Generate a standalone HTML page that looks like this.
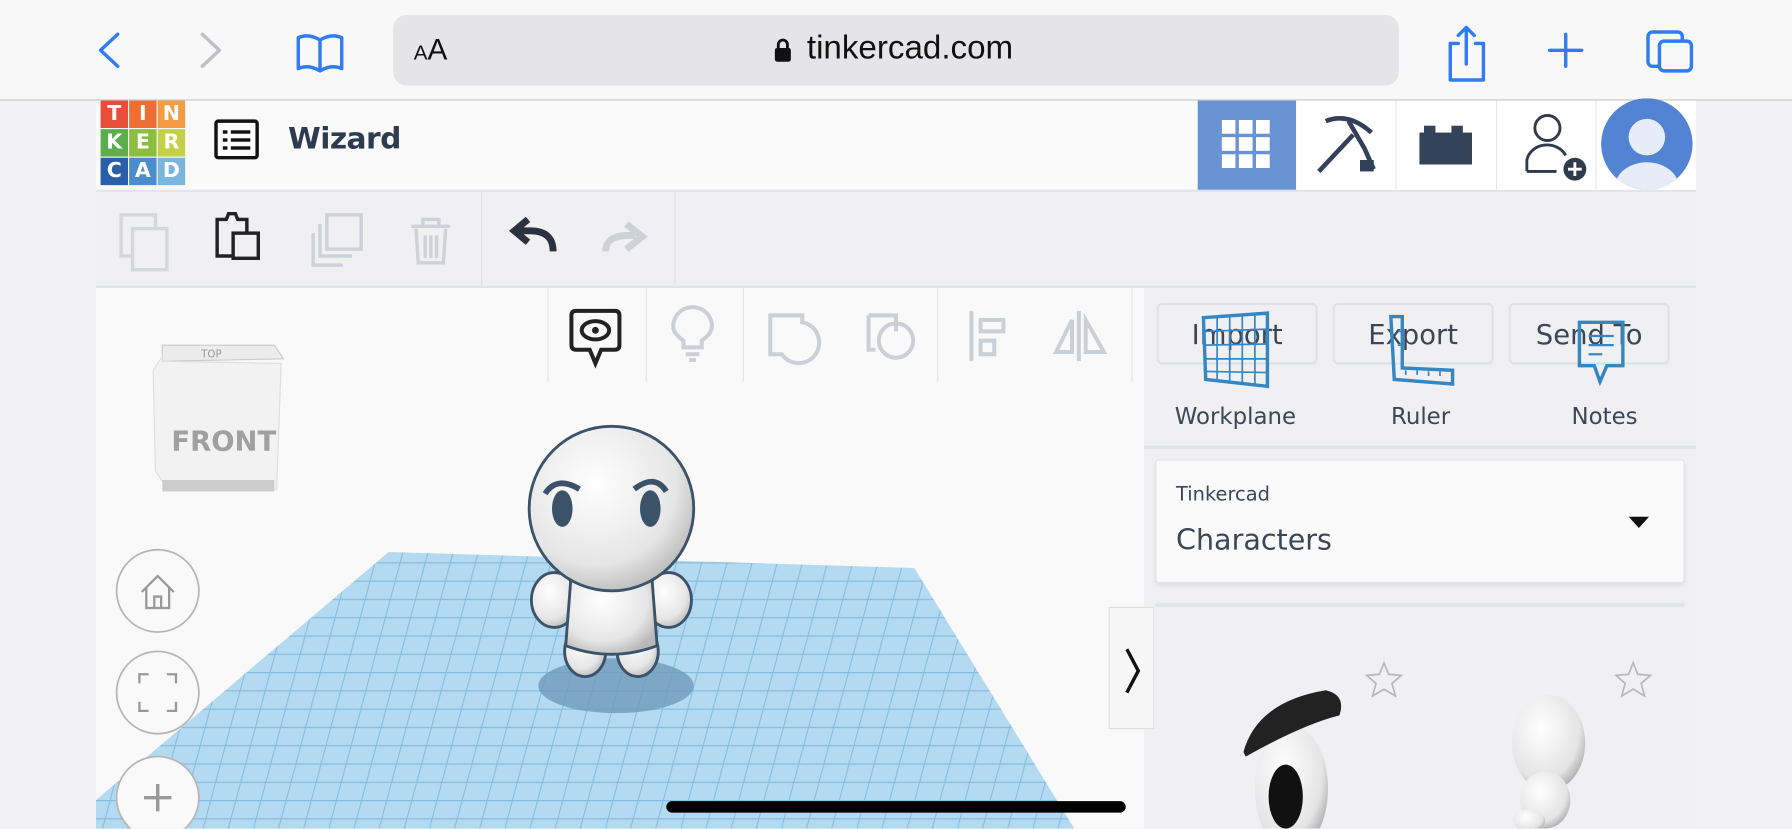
<!DOCTYPE html>
<html><head><meta charset="utf-8"><style>
html,body{margin:0;padding:0;width:1792px;height:828px;overflow:hidden;background:#f2f2f4}
#s{position:absolute;left:0;top:0;width:1568px;height:725px;transform:scale(1.142857);transform-origin:0 0;font-family:"Liberation Sans","DejaVu Sans",sans-serif;background:#f2f2f4;overflow:hidden}
.a{position:absolute}
.btn{position:absolute;top:265px;height:54px;width:141px;border:2px solid #dfe2e8;border-radius:5px;box-sizing:border-box;text-align:center;line-height:52px;font-size:24px;color:#3b4757;font-family:"DejaVu Sans",sans-serif}
.lbl{position:absolute;top:352px;font-size:20px;color:#3b4757;font-family:"DejaVu Sans",sans-serif;width:160px;text-align:center}
.cell{position:absolute;width:24px;height:24px;color:#fff;font:bold 18px "DejaVu Sans",sans-serif;text-align:center;line-height:24px}
</style></head><body><div id="s">
<div class="a" style="left:0;top:0;width:1568px;height:87px;background:#f8f8f8;border-bottom:1px solid #c4c4c4"></div>
<svg class="a" style="left:0;top:0" width="1568" height="88">
<g fill="none" stroke-width="3" stroke-linecap="round" stroke-linejoin="round">
<path d="M103 30 L88 44 L103 58" stroke="#2f7cf6"/>
<path d="M177 30 L192 44 L177 58" stroke="#c0c0c4"/>
<path d="M261 33 Q270 29 280 35 Q290 29 299 33 V60 Q290 56 280 62 Q270 56 261 60 Z M280 35 V62" stroke="#2f7cf6"/>
<path d="M1202 38 A12 12 0 1 1 1190 32" stroke="#111" stroke-width="2.5"/>
<path d="M1186 27 L1192 32 L1186 37" stroke="#111" stroke-width="2.5"/>
<path d="M1276 38 H1269 V70 H1298 V38 H1291 M1283 56 V25 M1276 31 L1283 24 L1290 31" stroke="#2f7cf6"/>
<path d="M1370 30 V58 M1356 44 H1384" stroke="#2f7cf6"/>
<rect x="1442" y="28" width="30" height="30" rx="4" stroke="#2f7cf6"/>
<rect x="1452" y="36" width="28" height="26" rx="4" stroke="#2f7cf6" fill="#f8f8f8"/>
</g></svg>
<div class="a" style="left:344px;top:13px;width:880px;height:62px;background:#e5e5e7;border-radius:12px"></div>
<div class="a" style="left:362px;top:28px;font-size:26px;color:#111"><span style="font-size:18px">A</span>A</div>
<svg class="a" style="left:677px;top:33px" width="16" height="22"><rect x="1" y="9" width="14" height="12" rx="2" fill="#111"/><path d="M4 10 V6 A4 4 0 0 1 12 6 V10" fill="none" stroke="#111" stroke-width="2.5"/></svg>
<div class="a" style="left:706px;top:26px;font-size:29px;color:#111">tinkercad.com</div>
<div class="a" style="left:84px;top:88px;width:1400px;height:78px;background:#fafafa;border-bottom:2px solid #e3e5ea"></div>
<div class="cell" style="left:88px;top:88px;background:#e84f3b">T</div><div class="cell" style="left:113px;top:88px;background:#ef6e35">I</div><div class="cell" style="left:138px;top:88px;background:#f49b44">N</div>
<div class="cell" style="left:88px;top:113px;background:#5cad4c">K</div><div class="cell" style="left:113px;top:113px;background:#8bbd3e">E</div><div class="cell" style="left:138px;top:113px;background:#c4d048">R</div>
<div class="cell" style="left:88px;top:138px;background:#2a5ea8">C</div><div class="cell" style="left:113px;top:138px;background:#4a8ccc">A</div><div class="cell" style="left:138px;top:138px;background:#7ab5dd">D</div>
<svg class="a" style="left:187px;top:104px" width="40" height="36"><rect x="2" y="2" width="36" height="32" rx="2" fill="none" stroke="#111" stroke-width="3"/><g fill="#111"><rect x="8" y="10" width="4" height="3"/><rect x="15" y="10" width="17" height="3"/><rect x="8" y="17" width="4" height="3"/><rect x="15" y="17" width="17" height="3"/><rect x="8" y="24" width="4" height="3"/><rect x="15" y="24" width="17" height="3"/></g></svg>
<div class="a" style="left:252px;top:107px;font:600 26px 'DejaVu Sans',sans-serif;color:#2d3b4e;letter-spacing:-0.5px">Wizard</div>
<div class="a" style="left:1048px;top:88px;width:86px;height:78px;background:#6a93d4"></div>
<svg class="a" style="left:1069px;top:105px" width="44" height="44" fill="#fff"><rect x="0" y="0" width="12" height="12"/><rect x="15" y="0" width="12" height="12"/><rect x="30" y="0" width="12" height="12"/><rect x="0" y="15" width="12" height="12"/><rect x="15" y="15" width="12" height="12"/><rect x="30" y="15" width="12" height="12"/><rect x="0" y="30" width="12" height="12"/><rect x="15" y="30" width="12" height="12"/><rect x="30" y="30" width="12" height="12"/></svg>
<div class="a" style="left:1135px;top:88px;width:349px;height:78px;background:#fff"></div>
<div class="a" style="left:1221px;top:88px;width:1px;height:78px;background:#e6e6e6"></div><div class="a" style="left:1309px;top:88px;width:1px;height:78px;background:#e6e6e6"></div><div class="a" style="left:1396px;top:88px;width:1px;height:78px;background:#e6e6e6"></div>
<svg class="a" style="left:1150px;top:96px" width="60" height="60" fill="none" stroke="#34405a" stroke-width="4"><path d="M10 10 Q30 2 50 20 M30 10 L44 34 L52 52 M34 22 L4 54"/><rect x="40" y="44" width="12" height="10" fill="#34405a" stroke="none"/></svg>
<svg class="a" style="left:1240px;top:108px" width="50" height="36"><rect x="2" y="8" width="46" height="28" fill="#35435a"/><rect x="6" y="2" width="10" height="8" fill="#35435a"/><rect x="30" y="2" width="10" height="8" fill="#35435a"/></svg>
<svg class="a" style="left:1330px;top:98px" width="62" height="62" fill="none" stroke="#2f3a4d" stroke-width="2.5"><circle cx="24" cy="14" r="11"/><path d="M6 52 V42 A18 16 0 0 1 40 38 M6 52 H32"/><circle cx="48" cy="50" r="10" fill="#2f3a4d" stroke="none"/><path d="M48 44 V56 M42 50 H54" stroke="#fff"/></svg>
<svg class="a" style="left:1400px;top:86px" width="84" height="80"><clipPath id="c"><circle cx="41" cy="40" r="40"/></clipPath><circle cx="41" cy="40" r="40" fill="#5383d3"/><g clip-path="url(#c)" fill="#e6ecf8"><circle cx="41" cy="34" r="16"/><ellipse cx="41" cy="78" rx="28" ry="22"/></g></svg>
<div class="a" style="left:84px;top:168px;width:1400px;height:82px;background:#f0f0f2;border-bottom:3px solid #e1e4ea"></div>
<div class="a" style="left:421px;top:168px;width:1px;height:82px;background:#dfe1e6"></div><div class="a" style="left:590px;top:168px;width:1px;height:82px;background:#dfe1e6"></div>
<svg class="a" style="left:100px;top:180px" width="490" height="60" fill="none" stroke-width="3">
<rect x="6" y="8" width="30" height="36" stroke="#d4d7dc"/><rect x="16" y="20" width="30" height="36" stroke="#d4d7dc" fill="#f0f0f2"/>
<path d="M90 12 H98 L100 7 H106 L108 12 H116 V44 H90 Z" stroke="#222"/><rect x="104" y="24" width="22" height="22" stroke="#222" fill="#f0f0f2"/>
<rect x="186" y="8" width="30" height="30" stroke="#cdd1d8"/><path d="M180 16 V44 H208 M174 24 V52 H200" stroke="#cdd1d8"/>
<path d="M260 18 H294 M270 18 V12 H284 V18 M264 20 L266 50 H288 L290 20 M272 26 V46 M277 26 V46 M282 26 V46" stroke="#cdd1d8"/>
<path d="M384 40 Q384 22 364 22 H354 M362 12 L350 22 L362 32" stroke="#2a3240" stroke-width="6"/>
<path d="M430 40 Q430 26 450 26 H456 M448 16 L462 27 L448 38" stroke="#cdd1d8" stroke-width="6"/>
</svg>
<div class="a" style="left:84px;top:252px;width:917px;height:473px;background:#f9f9f9"></div>
<div class="a" style="left:479px;top:252px;width:1px;height:82px;background:#e3e4e8"></div><div class="a" style="left:565px;top:252px;width:1px;height:82px;background:#e3e4e8"></div><div class="a" style="left:650px;top:252px;width:1px;height:82px;background:#e3e4e8"></div><div class="a" style="left:820px;top:252px;width:1px;height:82px;background:#e3e4e8"></div><div class="a" style="left:990px;top:252px;width:1px;height:82px;background:#e3e4e8"></div>
<svg class="a" style="left:480px;top:252px" width="520" height="80" fill="none" stroke-width="3.5">
<path d="M24 20 H58 Q62 20 62 24 V50 Q62 54 58 54 H46 L41 66 L36 54 H24 Q20 54 20 50 V24 Q20 20 24 20 Z" stroke="#222"/>
<ellipse cx="41" cy="37" rx="12" ry="8" stroke="#222"/><circle cx="41" cy="37" r="3" fill="#222"/>
<path d="M118 52 V46 Q106 38 110 28 A17 17 0 0 1 142 28 Q146 38 134 46 V52 Z M120 58 H132 M123 63 H129" stroke="#cbd0d8"/>
<path d="M194 24 H222 V30 A18 18 0 1 1 204 58 H194 Z" stroke="#cbd0d8"/>
<path d="M280 24 H304 V38 M286 54 H280 V24" stroke="#cbd0d8"/><circle cx="304" cy="46" r="15" stroke="#cbd0d8"/>
<path d="M370 20 V64 M378 28 H398 V38 H378 Z M378 46 H390 V58 H378 Z" stroke="#cbd0d8"/>
<path d="M464 20 V64 M458 28 L444 56 H458 Z M470 28 L486 56 H470 Z" stroke="#cbd0d8"/>
</svg>
<svg class="a" style="left:128px;top:294px" width="125" height="145">
<path d="M14 8 L112 8 L120 20 L14 22 Z" fill="#ececec" stroke="#ccc"/>
<text x="48" y="19" font-size="9" fill="#999" font-family="DejaVu Sans">TOP</text>
<path d="M6 30 L14 18 L14 22 L118 24 L114 134 L16 130 L8 118 Z" fill="#f2f2f2" stroke="#ddd"/>
<rect x="14" y="126" width="98" height="10" fill="#ccc"/>
<text x="22" y="100" font-size="24" font-weight="bold" fill="#a0a0a0" font-family="DejaVu Sans">FRONT</text>
</svg>
<svg class="a" style="left:84px;top:252px" width="917" height="473">
<defs><pattern id="g" width="22" height="16" patternUnits="userSpaceOnUse" patternTransform="skewX(-15)"><rect width="22" height="16" fill="#b3daf0"/><path d="M0 0.5 H22 M0.5 0 V16" stroke="#86bde0" stroke-width="1"/></pattern></defs>
<polygon points="256,231 716,245 856,473 0,473 0,448" fill="url(#g)"/>
<ellipse cx="455" cy="348" rx="68" ry="24" fill="#6f9ab9" opacity="0.8"/>
</svg>
<svg class="a" style="left:455px;top:370px" width="170" height="230">
<defs><radialGradient id="w" cx="0.4" cy="0.35" r="0.7"><stop offset="0" stop-color="#fff"/><stop offset="0.7" stop-color="#e6e6e6"/><stop offset="1" stop-color="#b8b8b8"/></radialGradient></defs>
<g stroke="#3b5269" stroke-width="2.5" fill="url(#w)">
<ellipse cx="57" cy="200" rx="18" ry="22"/><ellipse cx="103" cy="200" rx="18" ry="22"/>
<ellipse cx="30" cy="155" rx="20" ry="24"/><ellipse cx="130" cy="155" rx="20" ry="24"/>
<path d="M45 130 H115 L120 195 Q80 210 40 195 Z"/>
<circle cx="80" cy="75" r="72"/>
</g>
<g fill="#3b5269"><ellipse cx="37" cy="75" rx="9" ry="16"/><ellipse cx="114" cy="75" rx="9" ry="16"/></g>
<path d="M22 62 Q32 46 52 58 M100 58 Q118 44 128 60" stroke="#3b5269" stroke-width="5" fill="none"/>
</svg>
<svg class="a" style="left:100px;top:478px" width="80" height="247" fill="none" stroke="#b5b5b5" stroke-width="1.5">
<circle cx="38" cy="39" r="36" fill="#f9f9f9"/><circle cx="38" cy="128" r="36" fill="#f9f9f9"/><circle cx="38" cy="220" r="36" fill="#f9f9f9"/>
<path d="M24 40 L38 26 L52 40 M28 36 V54 H48 V36 M35 54 V44 H41 V54" stroke="#999" stroke-width="2"/>
<path d="M22 120 V112 H30 M46 112 H54 V120 M54 136 V144 H46 M30 144 H22 V136" stroke="#999" stroke-width="2"/>
<path d="M38 208 V232 M26 220 H50" stroke="#999" stroke-width="3"/>
</svg>
<div class="a" style="left:1001px;top:252px;width:483px;height:473px;background:#f0f0f2"></div>
<div class="btn" style="left:1012px">Import</div>
<div class="btn" style="left:1166px">Export</div>
<div class="btn" style="left:1320px">Send To</div>
<svg class="a" style="left:1040px;top:270px" width="420" height="80" fill="none" stroke="#3487c3" stroke-width="3">
<path d="M13 8 L69 4 V68 L15 62 Z"/><path d="M13 20 L69 18 M14 32 L69 31 M14 44 L69 44 M15 55 L69 56 M25 7 V63 M36 6 V64 M47 5 V66 M58 5 V67" stroke-width="1.5"/>
<path d="M177 7 H187 V52 L231 54 V66 L180 62 Z"/><path d="M190 54 V58 M200 54 V58 M210 55 V59 M220 55 V59 M187 20 H183 M187 32 H183" stroke-width="1.5"/>
<path d="M342 12 H380 V50 H366 L360 64 L355 50 H342 Z"/><path d="M350 24 H372 M350 32 H372 M350 40 H362" stroke-width="2"/>
</svg>
<div class="lbl" style="left:1001px">Workplane</div>
<div class="lbl" style="left:1163px">Ruler</div>
<div class="lbl" style="left:1324px">Notes</div>
<div class="a" style="left:1001px;top:390px;width:483px;height:3px;background:#e0e3e8"></div>
<div class="a" style="left:1011px;top:402px;width:463px;height:108px;background:#fafafa;border:1px solid #e3e5ea;box-shadow:0 2px 4px rgba(0,0,0,.08);border-radius:3px;box-sizing:border-box"></div>
<div class="a" style="left:1029px;top:423px;font-size:17px;color:#3b4757;font-family:'DejaVu Sans',sans-serif">Tinkercad</div>
<div class="a" style="left:1029px;top:458px;font-size:25px;color:#3b4757;font-family:'DejaVu Sans',sans-serif">Characters</div>
<svg class="a" style="left:1425px;top:452px" width="20" height="12"><path d="M0 0 H18 L9 10 Z" fill="#111"/></svg>
<div class="a" style="left:1011px;top:528px;width:463px;height:3px;background:#e0e3e8"></div>
<div class="a" style="left:970px;top:531px;width:40px;height:107px;background:#f7f7f7;border:1px solid #e0e0e0;box-sizing:border-box"></div>
<svg class="a" style="left:982px;top:565px" width="20" height="44"><path d="M4 3 L14 22 L4 41" fill="none" stroke="#111" stroke-width="3"/></svg>
<svg class="a" style="left:1192px;top:578px" width="260" height="36" fill="none" stroke="#b8b8b8" stroke-width="1.5"><path d="M19 2 L23 12 L34 13 L26 20 L29 31 L19 25 L9 31 L12 20 L4 13 L15 12 Z"/><path d="M237 2 L241 12 L252 13 L244 20 L247 31 L237 25 L227 31 L230 20 L222 13 L233 12 Z"/></svg>
<svg class="a" style="left:1080px;top:600px" width="380" height="125">
<defs><radialGradient id="w2" cx="0.4" cy="0.35" r="0.7"><stop offset="0" stop-color="#fff"/><stop offset="0.75" stop-color="#e4e4e4"/><stop offset="1" stop-color="#aaa"/></radialGradient></defs>
<ellipse cx="50" cy="90" rx="32" ry="55" fill="url(#w2)"/><ellipse cx="45" cy="97" rx="15" ry="28" fill="#111"/>
<path d="M8 58 Q20 14 80 4 Q98 8 92 26 Q60 34 10 62 Z" fill="#222"/>
<ellipse cx="275" cy="50" rx="32" ry="42" fill="url(#w2)"/><ellipse cx="272" cy="100" rx="22" ry="25" fill="url(#w2)"/><ellipse cx="258" cy="118" rx="14" ry="10" fill="url(#w2)"/>
</svg>
<div class="a" style="left:583px;top:701px;width:402px;height:10px;background:#000;border-radius:5px"></div>
</div></body></html>
